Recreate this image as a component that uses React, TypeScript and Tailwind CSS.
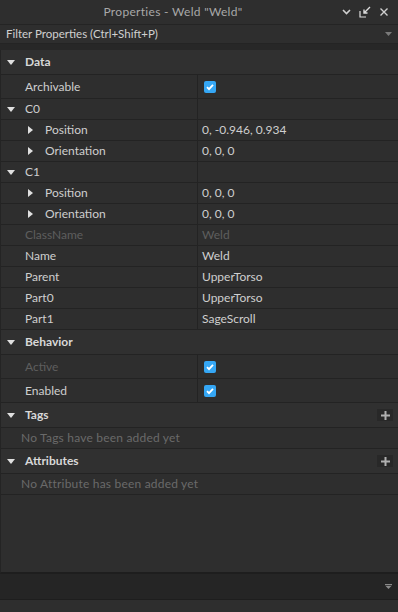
import type { ReactNode } from 'react'

type Row =
  | { kind: 'header'; label: string; plus?: boolean }
  | { kind: 'group'; label: string }
  | { kind: 'prop'; label: string; value?: string; check?: boolean; sub?: boolean; muted?: boolean }
  | { kind: 'empty'; label: string }

const ROWS: Row[] = [
  { kind: 'header', label: 'Data' },
  { kind: 'prop', label: 'Archivable', check: true },
  { kind: 'group', label: 'C0' },
  { kind: 'prop', label: 'Position', value: '0, -0.946, 0.934', sub: true },
  { kind: 'prop', label: 'Orientation', value: '0, 0, 0', sub: true },
  { kind: 'group', label: 'C1' },
  { kind: 'prop', label: 'Position', value: '0, 0, 0', sub: true },
  { kind: 'prop', label: 'Orientation', value: '0, 0, 0', sub: true },
  { kind: 'prop', label: 'ClassName', value: 'Weld', muted: true },
  { kind: 'prop', label: 'Name', value: 'Weld' },
  { kind: 'prop', label: 'Parent', value: 'UpperTorso' },
  { kind: 'prop', label: 'Part0', value: 'UpperTorso' },
  { kind: 'prop', label: 'Part1', value: 'SageScroll' },
  { kind: 'header', label: 'Behavior' },
  { kind: 'prop', label: 'Active', check: true, muted: true },
  { kind: 'prop', label: 'Enabled', check: true },
  { kind: 'header', label: 'Tags', plus: true },
  { kind: 'empty', label: 'No Tags have been added yet' },
  { kind: 'header', label: 'Attributes', plus: true },
  { kind: 'empty', label: 'No Attribute has been added yet' },
]

function DownTri() {
  return (
    <svg width="8" height="5" viewBox="0 0 8 5" className="shrink-0">
      <path d="M0 0h8L4 5z" fill="#e0e0e0" />
    </svg>
  )
}

function RightTri() {
  return (
    <svg width="5" height="8" viewBox="0 0 5 8" className="shrink-0">
      <path d="M0 0v8l5-4z" fill="#e0e0e0" />
    </svg>
  )
}

function Checkbox() {
  return (
    <div className="ml-[2px] w-[12px] h-[12px] rounded-[2px] bg-[#35a7f5] flex items-center justify-center">
      <svg width="10" height="10" viewBox="0 0 10 10">
        <path d="M2 5.2l2 2 4-4.4" stroke="#fff" strokeWidth="1.8" fill="none" />
      </svg>
    </div>
  )
}

function Cell({ children, className }: { children?: ReactNode; className?: string }) {
  return <div className={'flex items-center ' + (className ?? '')}>{children}</div>
}

function PropRow({ row }: { row: Row }) {
  if (row.kind === 'header') {
    return (
      <div className="h-[25px] flex items-center border-b border-[#232323] bg-[#303030] pl-[6px] pr-[5px]">
        <DownTri />
        <span className="ml-[10px] font-bold text-[#d8d8d8] text-[12px]">{row.label}</span>
        {row.plus && (
          <div className="ml-auto w-[16px] h-[12px] bg-[#282828] flex items-center justify-center">
            <svg width="9" height="9" viewBox="0 0 9 9">
              <path d="M4.5 0v9M0 4.5h9" stroke="#b0b0b0" strokeWidth="2" />
            </svg>
          </div>
        )}
      </div>
    )
  }
  if (row.kind === 'empty') {
    return (
      <div className="h-[21px] flex items-center border-b border-[#232323] pl-[20px] text-[#6a6a6a] tracking-[0.2px]">
        {row.label}
      </div>
    )
  }
  if (row.kind === 'group') {
    return (
      <div className="h-[21px] grid grid-cols-[197px_1fr] border-b border-[#232323]">
        <Cell className="pl-[6px] border-r border-[#232323]">
          <DownTri />
          <span className="ml-[10px] text-[#cfcfcf]">{row.label}</span>
        </Cell>
        <Cell />
      </div>
    )
  }
  const tall = row.check
  return (
    <div
      className={
        'grid grid-cols-[197px_1fr] border-b border-[#232323] ' + (tall ? 'h-[24px]' : 'h-[21px]')
      }
    >
      <Cell className={'border-r border-[#232323] ' + (row.sub ? 'pl-[27px]' : 'pl-[24px]')}>
        {row.sub && <RightTri />}
        <span
          className={
            (row.sub ? 'ml-[12px] ' : '') + (row.muted ? 'text-[#5e5e5e]' : 'text-[#cfcfcf]')
          }
        >
          {row.label}
        </span>
      </Cell>
      <Cell className="pl-[4px]">
        {row.check ? (
          <Checkbox />
        ) : (
          <span className={row.muted ? 'text-[#5e5e5e]' : 'text-[#cfcfcf]'}>{row.value}</span>
        )}
      </Cell>
    </div>
  )
}

export default function App() {
  return (
    <div className="w-[398px] h-[612px] bg-[#2e2e2e] flex flex-col overflow-hidden font-['Lato',sans-serif] text-[12px] leading-none">
      {/* Title bar */}
      <div className="h-[25px] shrink-0 flex items-center border-b border-[#242424] bg-[#2e2e2e]">
        <div className="flex-1 text-center text-[#a8a8a8] text-[12px] tracking-[0.3px] pl-[4px]">
          Properties - Weld "Weld"
        </div>
        <div className="flex items-center gap-[8px] pr-[9px]">
          <svg width="9" height="6" viewBox="0 0 9 6">
            <path d="M1 1l3.5 3.5L8 1" stroke="#cfcfcf" strokeWidth="1.6" fill="none" />
          </svg>
          <svg width="12" height="12" viewBox="0 0 12 12">
            <path d="M1 5v6h6" stroke="#dcdcdc" strokeWidth="1.2" fill="none" />
            <path d="M11 1L5 7M5 3.5V7h3.5" stroke="#dcdcdc" strokeWidth="1.4" fill="none" />
          </svg>
          <svg width="10" height="10" viewBox="0 0 10 10">
            <path d="M1.5 1.5l7 7M8.5 1.5l-7 7" stroke="#cfcfcf" strokeWidth="1.4" />
          </svg>
        </div>
      </div>

      {/* Filter */}
      <div className="h-[19px] shrink-0 flex items-center bg-[#2e2e2e] border-b border-[#242424] pl-[6px] pr-[6px]">
        <span className="text-[#d0d0d0] text-[11.5px]">Filter Properties (Ctrl+Shift+P)</span>
        <svg width="7" height="4" viewBox="0 0 7 4" className="ml-auto">
          <path d="M0 0h7L3.5 4z" fill="#7a7a7a" />
        </svg>
      </div>
      <div className="h-[6px] shrink-0 bg-[#272727]" />

      {/* Property grid */}
      <div className="flex-1 flex flex-col border-l border-[#242424] border-b-2 border-b-[#1e1e1e]">
        {ROWS.map((row, i) => (
          <PropRow key={i} row={row} />
        ))}
      </div>

      {/* Bottom bar */}
      <div className="h-[26px] shrink-0 flex items-center justify-end pr-[6px] bg-[#252525] border-b border-[#1e1e1e]">
        <svg width="7" height="5" viewBox="0 0 7 5">
          <path d="M0 0h7v1.2H0zM0.6 2h5.8L3.5 5z" fill="#8a8a8a" />
        </svg>
      </div>
      <div className="h-[12px] shrink-0 bg-[#2e2e2e]" />
    </div>
  )
}
